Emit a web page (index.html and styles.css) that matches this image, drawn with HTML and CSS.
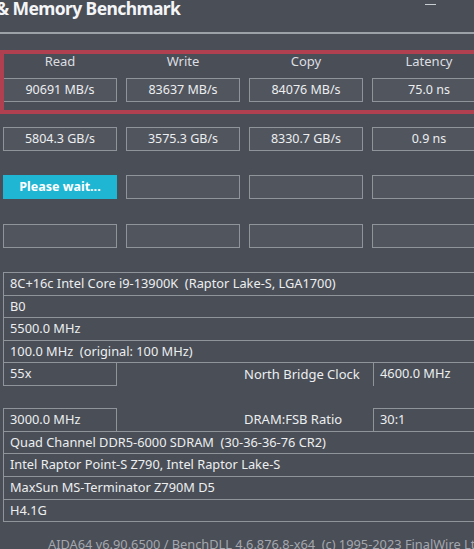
FILE: index.html
```html
<!DOCTYPE html>
<html lang="en">
<head>
    <meta charset="UTF-8">
    <meta name="viewport" content="width=device-width, initial-scale=1.0">
    <title>Cache &amp; Memory Benchmark</title>
    <link rel="stylesheet" href="styles.css">
</head>
<body>

    <!-- Title bar -->
    <div class="titlebar">
        <div class="title">&amp; Memory Benchmark</div>
        <div class="minimize"></div>
    </div>
    <div class="rule"></div>

    <!-- Benchmark results -->
    <div class="bench">
        <div class="bench-row labels">
            <div>Read</div>
            <div>Write</div>
            <div>Copy</div>
            <div>Latency</div>
        </div>
        <div class="bench-row">
            <div class="box">90691 MB/s</div>
            <div class="box">83637 MB/s</div>
            <div class="box">84076 MB/s</div>
            <div class="box">75.0 ns</div>
        </div>
        <div class="bench-row">
            <div class="box">5804.3 GB/s</div>
            <div class="box">3575.3 GB/s</div>
            <div class="box">8330.7 GB/s</div>
            <div class="box">0.9 ns</div>
        </div>
        <div class="bench-row">
            <div class="box busy">Please wait...</div>
            <div class="box"></div>
            <div class="box"></div>
            <div class="box"></div>
        </div>
        <div class="bench-row">
            <div class="box"></div>
            <div class="box"></div>
            <div class="box"></div>
            <div class="box"></div>
        </div>

        <!-- Highlight around the first result row -->
        <div class="highlight"></div>
    </div>

    <!-- System info -->
    <div class="info">
        <div class="row">8C+16c Intel Core i9-13900K&nbsp; (Raptor Lake-S, LGA1700)</div>
        <div class="row">B0</div>
        <div class="row">5500.0 MHz</div>
        <div class="row last">100.0 MHz&nbsp; (original: 100 MHz)</div>
        <div class="split">
            <div class="cell boxed">55x</div>
            <div class="label">North Bridge Clock</div>
            <div class="cell open">4600.0 MHz</div>
        </div>
    </div>

    <div class="info second">
        <div class="split top">
            <div class="cell boxed">3000.0 MHz</div>
            <div class="label">DRAM:FSB Ratio</div>
            <div class="cell open">30:1</div>
        </div>
        <div class="row">Quad Channel DDR5-6000 SDRAM&nbsp; (30-36-36-76 CR2)</div>
        <div class="row">Intel Raptor Point-S Z790, Intel Raptor Lake-S</div>
        <div class="row">MaxSun MS-Terminator Z790M D5</div>
        <div class="row last">H4.1G</div>
    </div>

    <div class="footer">AIDA64 v6.90.6500 / BenchDLL 4.6.876.8-x64&nbsp; (c) 1995-2023 FinalWire Ltd.</div>

</body>
</html>
```

FILE: styles.css
```css
/* Theme colours */
:root {
    --bg: #4a4e57;
    --box-bg: #51555e;
    --line: #8f939a;
    --text: #eceef0;
    --muted: #a3a7ad;
    --accent: #1fb6d3;
    --mark: #b0404f;
    --font: 'Noto Sans', 'Open Sans', sans-serif;
}

* {
    margin: 0;
    padding: 0;
    box-sizing: border-box;
}

body {
    width: 474px;
    height: 549px;
    overflow: hidden;
    background-color: var(--bg);
    color: var(--text);
    font-family: var(--font);
    font-size: 12.5px;
}

/* Title bar */
.titlebar {
    position: relative;
    height: 32px;
}

.title {
    margin-left: -4px;
    font-size: 17.5px;
    font-weight: 700;
    letter-spacing: -0.6px;
    line-height: 17px;
    color: #f4f5f7;
    white-space: nowrap;
}

.minimize {
    position: absolute;
    top: 4px;
    right: 38px;
    width: 11px;
    height: 1px;
    background-color: #c9ccd1;
}

.rule {
    height: 2px;
    background-color: #9ca0a7;
}

/* Benchmark grid */
.bench {
    position: relative;
    padding: 16px 0 0 3px;
}

.bench-row {
    display: grid;
    grid-template-columns: repeat(4, 114px);
    column-gap: 9px;
    height: 24px;
    margin-bottom: 24.5px;
}

.bench-row.labels {
    height: 22px;
    margin-bottom: 6px;
    line-height: 22px;
    font-size: 13px;
    text-align: center;
    color: #dcdee1;
}

.box {
    border: 1px solid var(--line);
    background-color: var(--box-bg);
    text-align: center;
    line-height: 22px;
    white-space: nowrap;
}

.box.busy {
    border-color: var(--accent);
    background-color: var(--accent);
    color: #ffffff;
    font-weight: 700;
}

.highlight {
    position: absolute;
    top: 16px;
    left: 0;
    width: 490px;
    height: 64px;
    border: 4px solid var(--mark);
}

/* System info rows */
.info {
    margin: 1.5px 0 0 3px;
    width: 500px;
    font-size: 12.8px;
}

.info.second {
    margin-top: 22px;
}

.row {
    height: 22.7px;
    padding-left: 6px;
    border: 1px solid var(--line);
    border-bottom: none;
    line-height: 21px;
    white-space: nowrap;
}

.row.last {
    border-bottom: 1px solid var(--line);
}

.split {
    display: grid;
    grid-template-columns: 114px 256px 1fr;
    height: 23px;
    line-height: 21px;
}

.split .cell {
    padding-left: 6px;
    white-space: nowrap;
}

.split .boxed {
    border: 1px solid var(--line);
    border-top: none;
}

.split .open {
    border-left: 1px solid var(--line);
}

.split.top .boxed {
    border-top: 1px solid var(--line);
    border-bottom: none;
}

.split.top .open {
    border-top: 1px solid var(--line);
}

.split .label {
    padding: 1px 0 0 127px;
    font-size: 13px;
    white-space: nowrap;
}

/* Footer */
.footer {
    padding: 13px 0 0 48px;
    color: var(--muted);
    font-size: 12.8px;
    white-space: nowrap;
}
```
